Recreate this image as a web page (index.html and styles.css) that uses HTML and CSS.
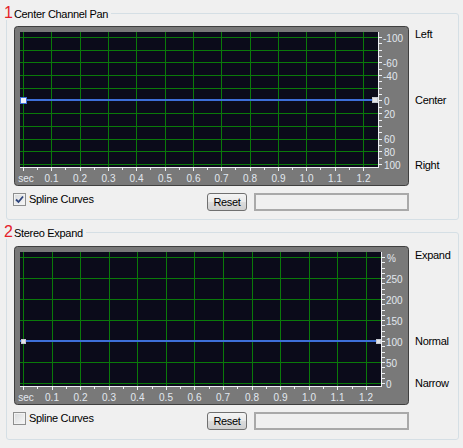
FILE: index.html
```html
<!DOCTYPE html>
<html>
<head>
<meta charset="utf-8">
<title>Channel Pan</title>
<link rel="stylesheet" href="styles.css">
</head>
<body>
<section class="group g1">
  <div class="title"><span class="num">1</span><span>Center Channel Pan</span></div>
  <svg class="chart" width="443" height="160" viewBox="0 0 443 160">
    <rect class="panel" x="0.5" y="0.5" width="394" height="159" rx="3"/>
    <rect class="plot" x="6" y="6" width="358" height="135"/>
    <path class="grid" d="M9.5 6V141M37.5 6V141M66.5 6V141M94.5 6V141M122.5 6V141M151.5 6V141M179.5 6V141M207.5 6V141M236.5 6V141M264.5 6V141M292.5 6V141M321.5 6V141M349.5 6V141M6 11.5H364M6 24.5H364M6 36.5H364M6 49.5H364M6 62.5H364M6 87.5H364M6 100.5H364M6 113.5H364M6 125.5H364M6 138.5H364"/>
    <line class="curve" x1="6" y1="74" x2="364" y2="74"/>
    <rect class="handle sel" x="6.5" y="71.5" width="6" height="6"/>
    <rect class="handle" x="358.5" y="71.5" width="5" height="5"/>
    <path class="axis" d="M364.5 6V141.5M6 141.5H365M365 11.5h3M365 17.5h3M365 24.5h3M365 30.5h3M365 36.5h3M365 43.5h3M365 49.5h3M365 55.5h3M365 62.5h3M365 68.5h3M365 74.5h3M365 81.5h3M365 87.5h3M365 94.5h3M365 100.5h3M365 106.5h3M365 113.5h3M365 119.5h3M365 125.5h3M365 132.5h3M365 138.5h3M9.5 141v4M23.5 141v3M37.5 141v4M51.5 141v3M66.5 141v4M80.5 141v3M94.5 141v4M108.5 141v3M122.5 141v4M136.5 141v3M151.5 141v4M165.5 141v3M179.5 141v4M193.5 141v3M207.5 141v4M221.5 141v3M236.5 141v4M250.5 141v3M264.5 141v4M278.5 141v3M292.5 141v4M306.5 141v3M321.5 141v4M335.5 141v3M349.5 141v4"/>
    <g class="ylab">
      <text x="369" y="12">-100</text>
      <text x="369" y="37">-60</text>
      <text x="369" y="50">-40</text>
      <text x="370" y="75">0</text>
      <text x="370" y="88">20</text>
      <text x="370" y="113">60</text>
      <text x="370" y="126">80</text>
      <text x="370" y="139">100</text>
    </g>
    <g class="xlab">
      <text x="12" y="152">sec</text>
      <text x="37.5" y="152">0.1</text>
      <text x="66" y="152">0.2</text>
      <text x="94.5" y="152">0.3</text>
      <text x="122.5" y="152">0.4</text>
      <text x="151" y="152">0.5</text>
      <text x="179.5" y="152">0.6</text>
      <text x="207.5" y="152">0.7</text>
      <text x="236" y="152">0.8</text>
      <text x="264.5" y="152">0.9</text>
      <text x="292.5" y="152">1.0</text>
      <text x="321" y="152">1.1</text>
      <text x="349.5" y="152">1.2</text>
    </g>
    <g class="side">
      <text x="401" y="8">Left</text>
      <text x="401" y="74">Center</text>
      <text x="401" y="139">Right</text>
    </g>
  </svg>
  <div class="controls">
    <label class="check"><span class="box"><svg width="11" height="11" viewBox="0 0 11 11"><path d="M2 5.5L4.5 8L9 2.5" /></svg></span>Spline Curves</label>
    <button class="btn">Reset</button>
    <div class="field"></div>
  </div>
</section>

<section class="group g2">
  <div class="title"><span class="num">2</span><span>Stereo Expand</span></div>
  <svg class="chart" width="443" height="159" viewBox="0 0 443 159">
    <rect class="panel" x="0.5" y="0.5" width="394" height="158" rx="3"/>
    <rect class="plot" x="6" y="6" width="361" height="134"/>
    <path class="grid" d="M9.5 6V140M38.5 6V140M66.5 6V140M95.5 6V140M123.5 6V140M152.5 6V140M180.5 6V140M209.5 6V140M238.5 6V140M266.5 6V140M295.5 6V140M323.5 6V140M352.5 6V140M6 11.5H367M6 32.5H367M6 53.5H367M6 74.5H367M6 116.5H367M6 137.5H367"/>
    <line class="curve" x1="6" y1="95" x2="367" y2="95"/>
    <rect class="handle" x="7.5" y="93.5" width="4" height="4"/>
    <rect class="handle" x="362.5" y="93.5" width="4" height="4"/>
    <path class="axis" d="M367.5 6V140.5M6 140.5H368M368 11.5h3M368 16.5h3M368 22.5h3M368 27.5h3M368 32.5h3M368 37.5h3M368 43.5h3M368 48.5h3M368 53.5h3M368 58.5h3M368 64.5h3M368 69.5h3M368 74.5h3M368 79.5h3M368 85.5h3M368 90.5h3M368 95.5h3M368 100.5h3M368 106.5h3M368 111.5h3M368 116.5h3M368 121.5h3M368 127.5h3M368 132.5h3M368 137.5h3M9.5 140v4M23.5 140v3M38.5 140v4M52.5 140v3M66.5 140v4M80.5 140v3M95.5 140v4M109.5 140v3M123.5 140v4M138.5 140v3M152.5 140v4M166.5 140v3M180.5 140v4M195.5 140v3M209.5 140v4M223.5 140v3M238.5 140v4M252.5 140v3M266.5 140v4M280.5 140v3M295.5 140v4M309.5 140v3M323.5 140v4M338.5 140v3M352.5 140v4"/>
    <g class="ylab">
      <text x="373" y="12">%</text>
      <text x="372" y="33">250</text>
      <text x="372" y="54">200</text>
      <text x="372" y="75">150</text>
      <text x="372" y="96">100</text>
      <text x="372" y="117">50</text>
      <text x="372" y="138">0</text>
    </g>
    <g class="xlab">
      <text x="12" y="151">sec</text>
      <text x="38" y="151">0.1</text>
      <text x="66.5" y="151">0.2</text>
      <text x="95" y="151">0.3</text>
      <text x="123.5" y="151">0.4</text>
      <text x="152" y="151">0.5</text>
      <text x="180.5" y="151">0.6</text>
      <text x="209" y="151">0.7</text>
      <text x="238" y="151">0.8</text>
      <text x="266.5" y="151">0.9</text>
      <text x="295" y="151">1.0</text>
      <text x="323.5" y="151">1.1</text>
      <text x="352" y="151">1.2</text>
    </g>
    <g class="side">
      <text x="401" y="9">Expand</text>
      <text x="401" y="95">Normal</text>
      <text x="401" y="137">Narrow</text>
    </g>
  </svg>
  <div class="controls">
    <label class="check"><span class="box"></span>Spline Curves</label>
    <button class="btn">Reset</button>
    <div class="field"></div>
  </div>
</section>
</body>
</html>
```

FILE: styles.css
```css
html, body {
  margin: 0;
  background: #f0f0f0;
}
body {
  padding-top: 13px;
  font-family: "Liberation Sans", Arial, sans-serif;
  font-size: 11px;
  letter-spacing: -0.3px;
  color: #000;
}
.group {
  margin: 0 4px 0 6px;
  border: 1px solid #d5dfe5;
  border-radius: 3px;
  padding: 0 0 8px 7px;
}
.g2 {
  margin-top: 12px;
  padding-bottom: 9px;
}
.title {
  display: flex;
  align-items: baseline;
  width: max-content;
  height: 14px;
  line-height: 14px;
  margin: -8px 0 0 -10px;
  padding-right: 3px;
  background: #f0f0f0;
}
.num {
  font-size: 16px;
  color: #e5222a;
  margin-right: 1px;
  letter-spacing: 0;
}
.chart {
  display: block;
  margin-top: 6px;
}
.g2 .chart {
  margin-top: 7px;
}
.panel {
  fill: #797979;
  stroke: #3f3f3f;
}
.plot {
  fill: #0b0b1a;
}
.grid {
  stroke: #0a7a0a;
  stroke-width: 1;
  fill: none;
}
.curve {
  stroke: #3d6fd8;
  stroke-width: 2;
}
.handle {
  fill: #e2e4e8;
  stroke: #c4c8d0;
}
.handle.sel {
  fill: #eef2fa;
  stroke: #3d6fd8;
}
.axis {
  stroke: #eef0f4;
  stroke-width: 1;
  fill: none;
}
.ylab text, .xlab text {
  font-family: "Liberation Sans", Arial, sans-serif;
  font-size: 10px;
  letter-spacing: 0;
  fill: #e2e8ef;
  dominant-baseline: central;
}
.xlab text {
  text-anchor: middle;
}
.side text {
  font-family: "Liberation Sans", Arial, sans-serif;
  font-size: 11px;
  letter-spacing: -0.3px;
  fill: #000;
  dominant-baseline: central;
}
.controls {
  display: flex;
  align-items: flex-start;
  margin-top: 7px;
  height: 18px;
}
.check {
  display: flex;
  align-items: center;
  gap: 3px;
  width: 194px;
  margin-left: -1px;
  height: 13px;
  line-height: 13px;
}
.box {
  box-sizing: border-box;
  width: 13px;
  height: 13px;
  border: 1px solid #8e8f8f;
  background: linear-gradient(135deg, #d8dadc, #f8f8f8);
  box-shadow: inset 0 0 0 1px #f2f2f2;
  display: flex;
  align-items: center;
  justify-content: center;
}
.box path {
  fill: none;
  stroke: #2e447c;
  stroke-width: 1.8;
}
.btn {
  box-sizing: border-box;
  width: 40px;
  height: 18px;
  padding: 0;
  border: 1px solid #707070;
  border-radius: 3px;
  background: linear-gradient(#f4f4f4, #e9e9e9 50%, #dcdcdc 51%, #cfcfcf);
  font-family: "Liberation Sans", Arial, sans-serif;
  font-size: 11px;
  letter-spacing: -0.3px;
  color: #000;
  line-height: 16px;
}
.field {
  box-sizing: border-box;
  width: 155px;
  height: 18px;
  margin-left: 7px;
  border: 2px solid #a9a9a9;
  background: #f0f0f0;
}
```
